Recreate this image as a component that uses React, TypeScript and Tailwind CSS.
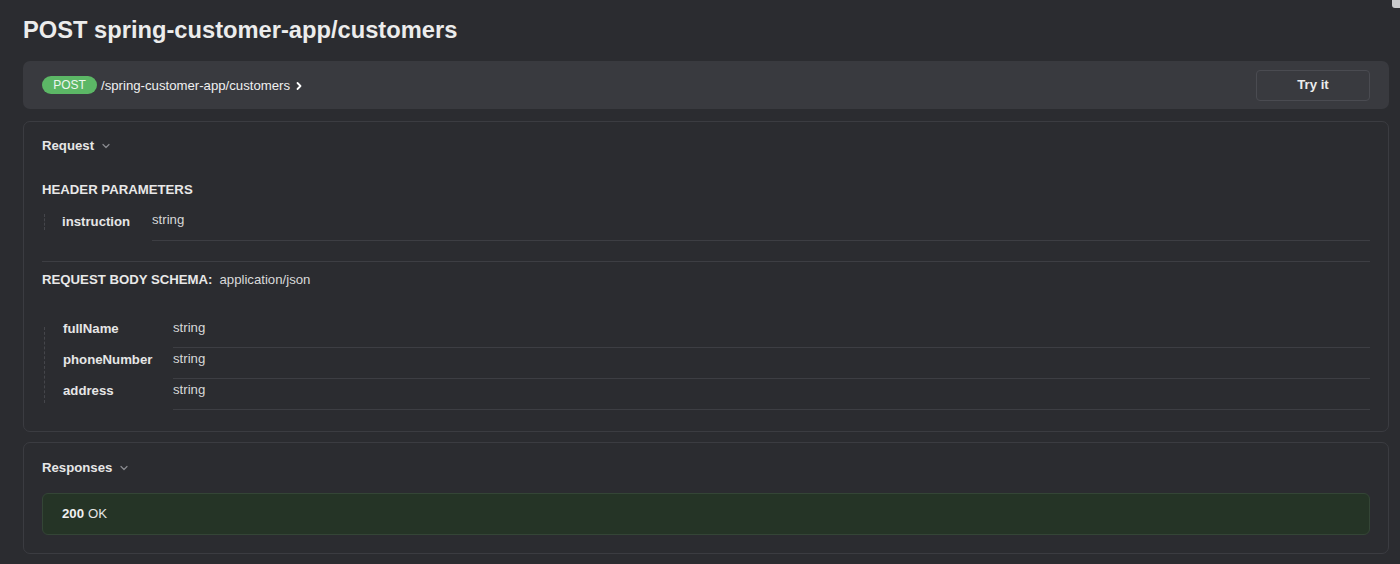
import React from "react";

const Chevron = ({ className = "" }: { className?: string }) => (
  <svg width="10" height="10" viewBox="0 0 10 10" className={className} fill="none">
    <path d="M2 3.5 L5 6.5 L8 3.5" stroke="currentColor" strokeWidth="1.2" strokeLinecap="round" strokeLinejoin="round" />
  </svg>
);

const Row = ({ name }: { name: string }) => (
  <div className="flex h-[31px]">
    <div className="w-[128px] pl-[18px] pt-[4px] leading-[16px] text-[13.2px] font-bold text-[#e6e6e6]">{name}</div>
    <div className="flex-1 border-b border-[#3d3e43] pt-[3px] leading-[16px] text-[13.2px] text-[#d8d8d8]">string</div>
  </div>
);

export default function App() {
  return (
    <div
      className="relative w-[1400px] h-[564px] bg-[#2b2c30] overflow-hidden"
      style={{ fontFamily: "'Liberation Sans', Arial, sans-serif" }}
    >
      <div className="absolute right-0 top-0 w-[8px] h-[8px] bg-[#c9cacc] rounded-bl-[3px]" />
      <div className="pl-[23px] pr-[11px] pt-[15px]">
        <h1 className="text-[23.7px] leading-[30px] font-bold text-[#ececec]">
          POST spring-customer-app/customers
        </h1>
        <div className="mt-[16px] h-[48px] rounded-[7px] bg-[#393a3f] flex items-center pl-[19px] pr-[19px]">
          <span className="h-[18px] w-[55px] rounded-full bg-[#5cb766] text-[12px] text-[#eef6ee] flex items-center justify-center">
            POST
          </span>
          <span className="ml-[4px] mt-[1px] text-[13.2px] text-[#f0f0f0]">/spring-customer-app/customers</span>
          <svg width="10" height="10" viewBox="0 0 10 10" className="ml-[4px] mt-[2px] text-white" fill="none">
            <path d="M3.5 2 L6.5 5 L3.5 8" stroke="currentColor" strokeWidth="1.8" strokeLinecap="round" strokeLinejoin="round" />
          </svg>
          <div className="flex-1" />
          <button className="w-[114px] h-[31px] rounded-[4px] border border-[#4a4b51] text-[13.2px] font-bold text-[#ececec]">
            Try it
          </button>
        </div>

        <div className="mt-[12px] h-[311px] rounded-[7px] border border-[#3b3c41] px-[18px] pt-[15px]">
          <div className="flex items-center gap-[7px] text-[13.2px] font-bold text-[#e6e6e6] h-[18px]">
            Request <Chevron className="text-[#8a8b90]" />
          </div>
          <div className="mt-[26px] text-[13.2px] font-bold text-[#e8e8e8] h-[18px] flex items-center">HEADER PARAMETERS</div>
          <div className="mt-[10px] flex">
            <div className="w-0 border-l border-dashed border-[#45464b] h-[16px] mt-[5px] ml-[2px]" />
            <div className="flex-1 flex h-[32px]">
              <div className="w-[107px] pl-[17px] pt-[5px] leading-[16px] text-[13.2px] font-bold text-[#e6e6e6]">instruction</div>
              <div className="flex-1 border-b border-[#3d3e43] pt-[3px] leading-[16px] text-[13.2px] text-[#d8d8d8]">string</div>
            </div>
          </div>
          <div className="mt-[20px] border-t border-[#3d3e43]" />
          <div className="mt-[9px] h-[18px] flex items-center text-[13.2px]">
            <span className="font-bold text-[#e8e8e8]">REQUEST BODY SCHEMA:</span>
            <span className="ml-[7px] text-[#dadada]">application/json</span>
          </div>
          <div className="mt-[28px] flex">
            <div className="w-0 border-l border-dashed border-[#45464b] h-[76px] mt-[10px] ml-[2px]" />
            <div className="flex-1">
              <Row name="fullName" />
              <Row name="phoneNumber" />
              <Row name="address" />
            </div>
          </div>
        </div>

        <div className="mt-[10px] h-[112px] rounded-[7px] border border-[#3b3c41] px-[18px] pt-[16px]">
          <div className="flex items-center gap-[7px] text-[13.2px] font-bold text-[#e6e6e6] h-[18px]">
            Responses <Chevron className="text-[#8a8b90]" />
          </div>
          <div className="mt-[16px] h-[42px] rounded-[6px] bg-[#253426] border border-[#344536] flex items-center pl-[19px] text-[13.2px]">
            <span className="font-bold text-[#f0f0f0]">200</span>
            <span className="ml-[4px] text-[#e6e6e6]">OK</span>
          </div>
        </div>
      </div>
    </div>
  );
}
